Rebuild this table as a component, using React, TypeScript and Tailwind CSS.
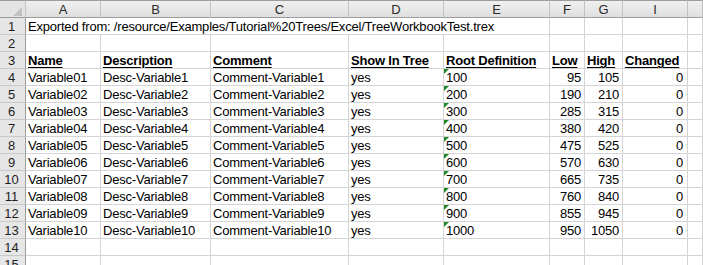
const cols = ['A', 'B', 'C', 'D', 'E', 'F', 'G', 'I', '']

type Row = {
  name: string
  desc: string
  comment: string
  show: string
  root: string
  low: number
  high: number
  changed: number
}

const rows: Row[] = Array.from({ length: 10 }, (_, i) => {
  const n = i + 1
  const root = n * 100
  return {
    name: `Variable${String(n).padStart(2, '0')}`,
    desc: `Desc-Variable${n}`,
    comment: `Comment-Variable${n}`,
    show: 'yes',
    root: String(root),
    low: root * 0.95,
    high: root * 1.05,
    changed: 0,
  }
})

const cell =
  'relative flex h-[17px] items-end overflow-hidden whitespace-nowrap border-b border-r border-[#d4d4d4] pb-[1px] leading-[13px] tracking-[-0.2px]'
const rowHead =
  'flex h-[17px] items-end justify-center border-b border-r border-b-[#c9c9c9] border-r-[#9c9c9c] bg-[#e6e6e6] pb-[1px] pr-[2px] leading-[13px] text-[#1e1e1e]'

function Flag() {
  return (
    <svg className="absolute left-0 top-0" width="5" height="5" viewBox="0 0 5 5">
      <polygon points="0,0 5,0 0,5" fill="#208a2a" />
    </svg>
  )
}

export default function App() {
  return (
    <div
      className="h-[265px] w-[703px] overflow-hidden bg-white text-[13px] text-black"
      style={{ fontFamily: '"Liberation Sans", Arial, sans-serif' }}
    >
      <div className="grid grid-cols-[26px_75px_110px_138px_95px_106px_35px_38px_65px_1fr]">
        {/* column headers */}
        <div className="relative h-[18px] border-b border-r border-t border-[#9c9c9c] border-r-[#c3c3c3] bg-[#e4e4e4]">
          <svg className="absolute left-[13px] top-[6px]" width="9" height="9" viewBox="0 0 9 9">
            <polygon points="9,0 9,9 0,9" fill="#c2c2c2" />
          </svg>
        </div>
        {cols.map((c, i) => (
          <div
            key={i}
            className="flex h-[18px] items-center justify-center border-b border-r border-t border-[#9c9c9c] border-r-[#c3c3c3] bg-gradient-to-b from-[#f0f0f0] to-[#dfdfdf] leading-[13px] text-[#2a2a2a]"
          >
            {c}
          </div>
        ))}

        {/* row 1 */}
        <div className={rowHead}>1</div>
        <div className={`${cell} col-span-5 pl-[2px]`}>
          Exported from: /resource/Examples/Tutorial%20Trees/Excel/TreeWorkbookTest.trex
        </div>
        <div className={cell} />
        <div className={cell} />
        <div className={cell} />
        <div className={cell} />

        {/* row 2 */}
        <div className={rowHead}>2</div>
        {cols.map((_, i) => (
          <div key={i} className={cell} />
        ))}

        {/* row 3 */}
        <div className={rowHead}>3</div>
        {['Name', 'Description', 'Comment', 'Show In Tree', 'Root Definition', 'Low', 'High', 'Changed'].map((h) => (
          <div key={h} className={`${cell} pl-[2px] font-bold`}>
            <span className="underline decoration-1 underline-offset-2">{h}</span>
          </div>
        ))}
        <div className={cell} />

        {/* data rows */}
        {rows.map((r, i) => (
          <div key={r.name} className="contents">
            <div className={rowHead}>{i + 4}</div>
            <div className={`${cell} pl-[2px]`}>{r.name}</div>
            <div className={`${cell} pl-[2px]`}>{r.desc}</div>
            <div className={`${cell} pl-[2px]`}>{r.comment}</div>
            <div className={`${cell} pl-[2px]`}>{r.show}</div>
            <div className={`${cell} pl-[2px]`}>
              <Flag />
              {r.root}
            </div>
            <div className={`${cell} justify-end pr-[3px]`}>{r.low}</div>
            <div className={`${cell} justify-end pr-[3px]`}>{r.high}</div>
            <div className={`${cell} justify-end pr-[4px]`}>{r.changed}</div>
            <div className={cell} />
          </div>
        ))}

        {/* empty rows */}
        {[14, 15].map((n) => (
          <div key={n} className="contents">
            <div className={rowHead}>{n}</div>
            {cols.map((_, i) => (
              <div key={i} className={cell} />
            ))}
          </div>
        ))}
      </div>
    </div>
  )
}
